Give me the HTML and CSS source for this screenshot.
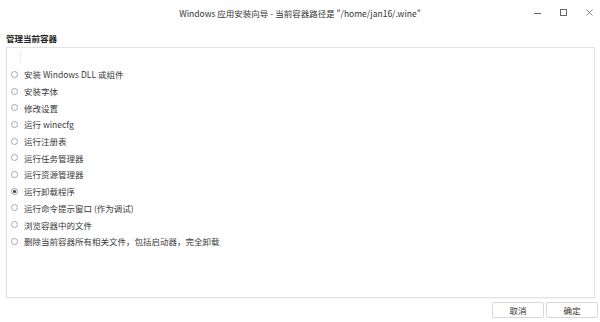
FILE: index.html
```html
<!DOCTYPE html>
<html lang="zh">
<head>
<meta charset="utf-8">
<link rel="stylesheet" href="styles.css">
</head>
<body>
<div class="window">
  <div class="titlebar">
    <div class="title">Windows 应用安装向导 - 当前容器路径是 "/home/jan16/.wine"</div>
    <div class="controls">
      <span class="ctl min"><svg width="9" height="9" viewBox="0 0 9 9"><path d="M1 5.5h7" stroke="#666" stroke-width="1"/></svg></span>
      <span class="ctl max"><svg width="9" height="9" viewBox="0 0 9 9"><rect x="1.5" y="1.5" width="6" height="6" fill="none" stroke="#666" stroke-width="1"/></svg></span>
      <span class="ctl close"><svg width="9" height="9" viewBox="0 0 9 9"><path d="M1.5 1.5l6 6M7.5 1.5l-6 6" stroke="#777" stroke-width="0.9"/></svg></span>
    </div>
  </div>
  <div class="content">
    <div class="section-label">管理当前容器</div>
    <div class="panel">
      <div class="caret"></div>
      <ul class="options">
        <li><span class="radio"></span>安装 Windows DLL 或组件</li>
        <li><span class="radio"></span>安装字体</li>
        <li><span class="radio"></span>修改设置</li>
        <li><span class="radio"></span>运行 winecfg</li>
        <li><span class="radio"></span>运行注册表</li>
        <li><span class="radio"></span>运行任务管理器</li>
        <li><span class="radio"></span>运行资源管理器</li>
        <li><span class="radio checked"></span>运行卸载程序</li>
        <li><span class="radio"></span>运行命令提示窗口 (作为调试)</li>
        <li><span class="radio"></span>浏览容器中的文件</li>
        <li><span class="radio"></span>删除当前容器所有相关文件，包括启动器，完全卸载</li>
      </ul>
    </div>
    <div class="buttons">
      <button class="btn">取消</button>
      <button class="btn">确定</button>
    </div>
  </div>
</div>
</body>
</html>
```
FILE: styles.css
```css
* { box-sizing: border-box; }
html, body { margin: 0; padding: 0; background: #fff; }
body {
  font-family: "Noto Sans CJK SC", "Noto Sans", sans-serif;
  font-size: 8.5px;
  color: #3a3a3a;
  width: 600px;
  height: 322px;
  overflow: hidden;
}
.window { display: flex; flex-direction: column; height: 322px; }
.titlebar {
  height: 25px;
  display: flex;
  align-items: center;
  justify-content: center;
  position: relative;
}
.title { color: #333; font-size: 8.5px; }
.controls {
  position: absolute;
  right: 0;
  top: 0;
  height: 25px;
  display: flex;
  align-items: center;
  gap: 17px;
  padding-right: 6px;
}
.ctl { width: 9px; height: 9px; display: flex; }
.content { padding: 7px 5px 0 6px; display: flex; flex-direction: column; flex: 1; }
.section-label { font-size: 8.5px; font-weight: 600; color: #222; line-height: 12px; height: 15px; }
.panel {
  height: 251px;
  border: 1px solid #e2e2e2;
  box-shadow: 0 1px 1px rgba(0,0,0,0.04);
  padding: 3px 0 0 4px;
}
.caret { width: 1px; height: 12px; background: #ececec; margin-left: 9px; }
.options { list-style: none; margin: 3px 0 0 0; padding: 0; }
.options li {
  height: 16.7px;
  display: flex;
  align-items: center;
  line-height: 16px;
  color: #3a3a3a;
  font-size: 8.5px;
}
.radio {
  width: 7px; height: 7px;
  border: 1px solid #a8a8a8;
  border-radius: 50%;
  margin: 0 6px 0 0;
  position: relative;
  flex: none;
}
.radio.checked { border-color: #999; }
.radio.checked::after {
  content: "";
  position: absolute;
  left: 1px; top: 1px;
  width: 3px; height: 3px;
  border-radius: 50%;
  background: #333;
}
.buttons { display: flex; justify-content: flex-end; gap: 2px; margin: 4px -3px 0 0; }
.btn {
  width: 52px; height: 16px;
  font-family: inherit; font-size: 8.5px; color: #333;
  background: #fff;
  border: 1px solid #d8d8d8;
  border-radius: 2px;
  padding: 0;
}
```
